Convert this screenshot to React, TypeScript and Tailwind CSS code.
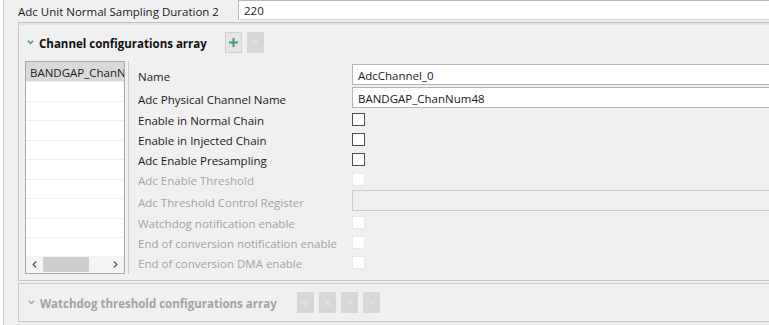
import { ChevronLeft, ChevronRight } from 'lucide-react';

const rows = [
  { label: 'Name', kind: 'input', value: 'AdcChannel_0' },
  { label: 'Adc Physical Channel Name', kind: 'input', value: 'BANDGAP_ChanNum48' },
  { label: 'Enable in Normal Chain', kind: 'check' },
  { label: 'Enable in Injected Chain', kind: 'check' },
  { label: 'Adc Enable Presampling', kind: 'check' },
  { label: 'Adc Enable Threshold', kind: 'check', disabled: true },
  { label: 'Adc Threshold Control Register', kind: 'input', value: '', disabled: true },
  { label: 'Watchdog notification enable', kind: 'check', disabled: true },
  { label: 'End of conversion notification enable', kind: 'check', disabled: true },
  { label: 'End of conversion DMA enable', kind: 'check', disabled: true },
];

function Chevron({ color }: { color: string }) {
  return (
    <svg width="7" height="5" viewBox="0 0 7 5" className="shrink-0">
      <path d="M0.8 0.8 L3.5 3.6 L6.2 0.8" fill="none" stroke={color} strokeWidth="1.4" />
    </svg>
  );
}

function ToolButton({ glyph, enabled }: { glyph: 'plus' | 'x' | 'up' | 'down'; enabled?: boolean }) {
  const stroke = enabled ? '#3b9a83' : '#e4e4e4';
  return (
    <div
      className={
        enabled
          ? 'w-[17px] h-[21px] shrink-0 flex items-center justify-center bg-[#e6e6e6] border border-[#cfcfcf]'
          : 'w-[17px] h-[21px] shrink-0 flex items-center justify-center bg-[#d7d7d7] border border-[#d7d7d7]'
      }
    >
      <svg width="11" height="11" viewBox="0 0 11 11">
        {glyph === 'plus' && <path d="M5.5 1 V10 M1 5.5 H10" stroke={stroke} strokeWidth={enabled ? 2 : 1.3} />}
        {glyph === 'x' && <path d="M2 2 L9 9 M9 2 L2 9" stroke={stroke} strokeWidth="1.3" />}
        {glyph === 'up' && <path d="M2.5 7 L5.5 4 L8.5 7" fill="none" stroke={stroke} strokeWidth="1.3" />}
        {glyph === 'down' && <path d="M2.5 4 L5.5 7 L8.5 4" fill="none" stroke={stroke} strokeWidth="1.3" />}
      </svg>
    </div>
  );
}

export default function App() {
  return (
    <div
      className="w-[769px] h-[325px] overflow-hidden flex bg-[#f0f0f0] text-[11.5px] text-[#1a1a1a]"
      style={{ fontFamily: '"Open Sans", "Noto Sans", sans-serif' }}
    >
      <div className="w-[4px] shrink-0 bg-white border-r border-[#c9c9c9]" />

      <div className="flex-1 flex flex-col pl-[14px]">
        {/* top field */}
        <div className="h-[20px] flex items-center">
          <div className="w-[220px] shrink-0 pt-[3px] whitespace-nowrap">Adc Unit Normal Sampling Duration 2</div>
          <div className="w-[560px] shrink-0 h-[20px] bg-white border border-[#b9b9b9] border-b-[#d6d6d6] pl-[5px] pt-[2px] flex items-center">
            220
          </div>
        </div>

        {/* channel configurations */}
        <div className="mt-[2px] w-[800px] shrink-0 h-[259px] border border-[#c6c6c6] border-t-[#c0c0c0] shadow-[inset_0_2px_0_#e2e2e2] flex flex-col">
          <div className="mt-[9px] h-[21px] flex items-center pl-[8px]">
            <Chevron color="#3b9a83" />
            <div className="w-[191px] shrink-0 pl-[5px] pt-[2px] font-bold text-[#111] whitespace-nowrap">
              Channel configurations array
            </div>
            <div className="flex gap-[5px]">
              <ToolButton glyph="plus" enabled />
              <ToolButton glyph="x" />
            </div>
          </div>

          <div className="mt-[8px] flex">
            <div className="ml-[6px] w-[100px] shrink-0 h-[213px] bg-white border border-[#a9a9a9] flex flex-col overflow-hidden">
              <div className="flex-1 overflow-hidden">
                <div className="h-[19px] bg-[#d9d9d9] pl-[4px] pt-[2px] flex items-center whitespace-nowrap overflow-hidden">
                  BANDGAP_ChanN
                </div>
                {Array.from({ length: 10 }).map((_, i) => (
                  <div key={i} className="h-[19.5px] border-t border-[#efefef]" />
                ))}
              </div>
              <div className="h-[17px] shrink-0 flex items-center bg-[#f4f4f4]">
                <div className="w-[17px] flex justify-center">
                  <ChevronLeft size={11} strokeWidth={2.5} color="#555" />
                </div>
                <div className="w-[46px] h-[15px] bg-[#cdcdcd]" />
                <div className="flex-1" />
                <div className="w-[17px] flex justify-center">
                  <ChevronRight size={11} strokeWidth={2.5} color="#555" />
                </div>
              </div>
            </div>

            <div className="ml-[3px] w-px shrink-0 h-[213px] bg-[#cbcbcb]" />

            <div className="ml-[9px] pt-[2px] flex flex-col">
              {rows.map((r) => (
                <div
                  key={r.label}
                  className={r.kind === 'input' ? 'h-[23px] flex items-center' : 'h-[20px] flex items-center'}
                >
                  <div
                    className={
                      r.disabled
                        ? 'w-[214px] shrink-0 pt-[4px] whitespace-nowrap text-[#a3a3a3]'
                        : 'w-[214px] shrink-0 pt-[4px] whitespace-nowrap'
                    }
                  >
                    {r.label}
                  </div>
                  {r.kind === 'input' ? (
                    <div
                      className={
                        r.disabled
                          ? 'w-[500px] shrink-0 h-[21px] border border-[#cccccc] bg-[#f0f0f0]'
                          : 'w-[500px] shrink-0 h-[21px] border border-[#b5b5b5] bg-white pl-[5px] pt-[2px] flex items-center'
                      }
                    >
                      {r.value}
                    </div>
                  ) : (
                    <div
                      className={
                        r.disabled
                          ? 'w-[13px] h-[13px] shrink-0 border border-[#e9e9e9] bg-white'
                          : 'w-[13px] h-[13px] shrink-0 border border-[#4d4d4d] bg-white'
                      }
                    />
                  )}
                </div>
              ))}
            </div>
          </div>
        </div>

        {/* watchdog thresholds */}
        <div className="mt-[2px] w-[800px] shrink-0 h-[39px] border border-[#cdcdcd] flex items-center pl-[9px]">
          <Chevron color="#a6a6a6" />
          <div className="w-[262px] shrink-0 pl-[5px] pt-[2px] font-bold text-[#a3a3a3] whitespace-nowrap">
            Watchdog threshold configurations array
          </div>
          <div className="flex gap-[5px]">
            <ToolButton glyph="plus" />
            <ToolButton glyph="x" />
            <ToolButton glyph="up" />
            <ToolButton glyph="down" />
          </div>
        </div>
      </div>
    </div>
  );
}
